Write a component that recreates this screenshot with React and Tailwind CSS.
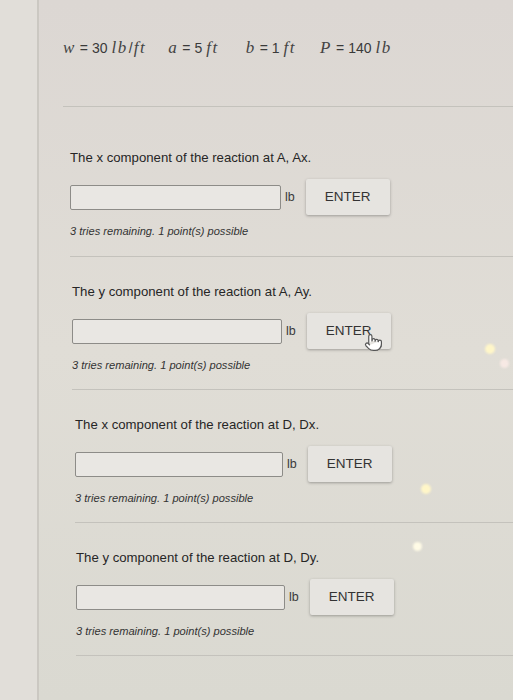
import { Pointer } from 'lucide-react';

const questions = [
  { label: 'The x component of the reaction at A, Ax.', ml: 'ml-[70px]', w: 'w-[211px]', first: true },
  { label: 'The y component of the reaction at A, Ay.', ml: 'ml-[72px]', w: 'w-[210px]', cursor: true },
  { label: 'The x component of the reaction at D, Dx.', ml: 'ml-[75px]', w: 'w-[208px]' },
  { label: 'The y component of the reaction at D, Dy.', ml: 'ml-[76px]', w: 'w-[209px]' },
];

function V({ children }) {
  return (
    <span className="italic font-['Liberation_Serif',serif] text-[17px] tracking-[1.5px] text-[#444]">
      {children}
    </span>
  );
}

function Question({ label, ml, w, cursor, first }) {
  return (
    <div
      className={`${ml} ${first ? 'h-[150px] pt-[43px]' : 'h-[133px] pt-[27px]'} border-b border-[#c4c2bc]`}
    >
      <p className="text-[13.2px] text-[#262626] leading-[16px]">{label}</p>
      <div className="mt-[13px] flex items-center">
        <div className={`${w} h-[25px] rounded-[2px] border border-[#8d8c88] bg-[#e9e7e3]`} />
        <span className="ml-[4px] text-[12.5px] text-[#3a3a3a]">lb</span>
        <div className="relative ml-[11px] flex h-[36px] w-[84px] items-center justify-center rounded-[2px] bg-[#e6e4e0] text-[13.5px] text-[#333] shadow-[0_1px_3px_rgba(0,0,0,0.3)]">
          ENTER
          {cursor && (
            <Pointer className="absolute left-[57px] top-[20px] h-[19px] w-[19px] text-[#555] fill-white" strokeWidth={1.5} />
          )}
        </div>
      </div>
      <p className="mt-[8px] text-[11.1px] italic text-[#333]">3 tries remaining. 1 point(s) possible</p>
    </div>
  );
}

export default function App() {
  return (
    <div className="relative h-[700px] w-[513px] overflow-hidden bg-gradient-to-b from-[#dcd7d3] via-[#e0ddd6] to-[#dad9d1] font-['Liberation_Sans',Arial,sans-serif]">
      <div className="flex h-full">
        <div className="w-[39px] shrink-0 border-r-2 border-[#cbc8c2] bg-[#e1ded9]" />
        <div className="flex-1">
          <div className="ml-[24px] h-[107px] border-b border-[#c4c2bc] pt-[35px]">
            <div className="flex items-baseline gap-[4px] text-[14px] text-[#3a3a3a]">
              <V>w</V>
              <span>=</span>
              <span>30</span>
              <V>lb</V>
              <span className="-mx-[3px]">/</span>
              <V>ft</V>
              <span className="ml-[14px]" />
              <V>a</V>
              <span>=</span>
              <span>5</span>
              <V>ft</V>
              <span className="ml-[19px]" />
              <V>b</V>
              <span>=</span>
              <span>1</span>
              <V>ft</V>
              <span className="ml-[16px]" />
              <V>P</V>
              <span>=</span>
              <span>140</span>
              <V>lb</V>
            </div>
          </div>
          <div className="-ml-[39px]">
            {questions.map((q) => (
              <Question key={q.label} {...q} />
            ))}
          </div>
        </div>
      </div>
      <div className="absolute left-[485px] top-[344px] h-[10px] w-[10px] rounded-full bg-[#fff6c8] blur-[1px]" />
      <div className="absolute left-[500px] top-[359px] h-[9px] w-[9px] rounded-full bg-[#f7e9e4] blur-[1px]" />
      <div className="absolute left-[421px] top-[484px] h-[10px] w-[10px] rounded-full bg-[#fff6c8] blur-[1px]" />
      <div className="absolute left-[413px] top-[542px] h-[9px] w-[9px] rounded-full bg-[#fffbe6] blur-[1px]" />
    </div>
  );
}
